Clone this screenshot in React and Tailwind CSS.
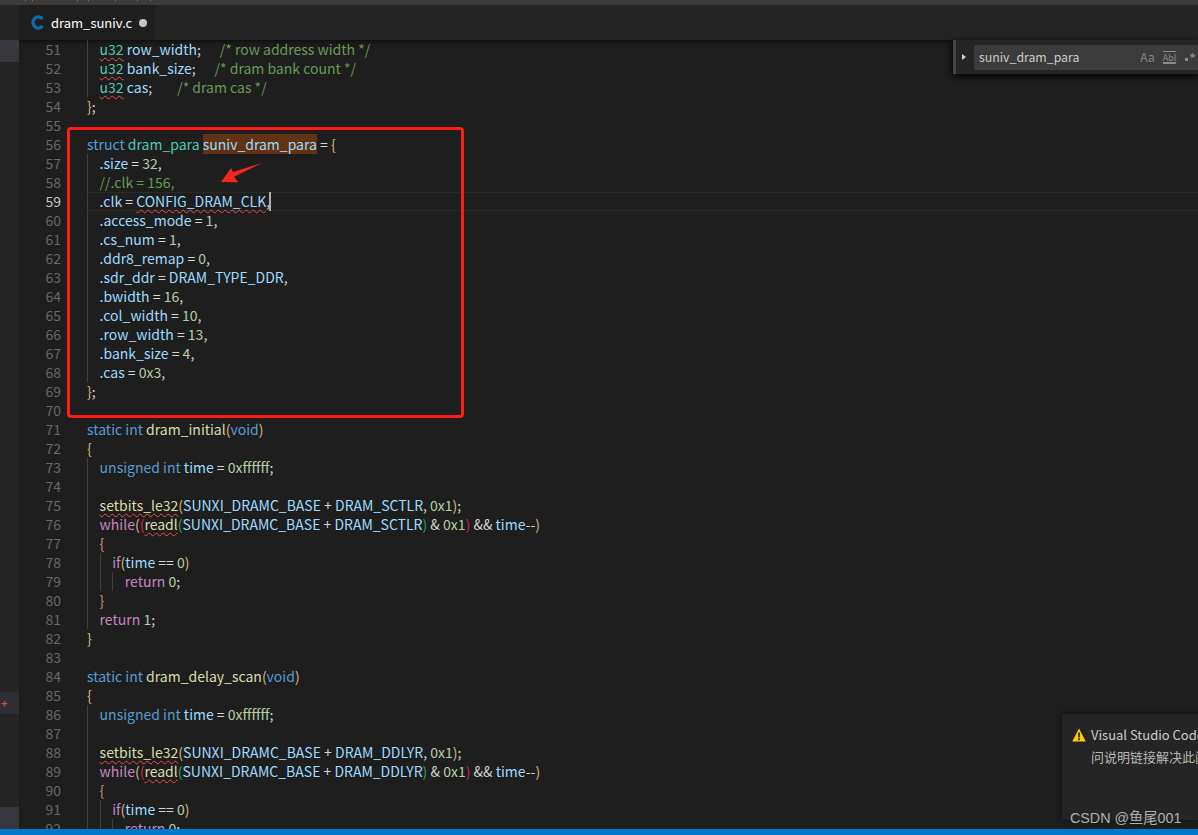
const K = "text-[#569cd6]", T = "text-[#4ec9b0]", V = "text-[#9cdcfe]", F = "text-[#dcdcaa]", N = "text-[#b5cea8]", C = "text-[#6a9955]", P = "text-[#c586c0]", D = "text-[#d4d4d4]", G = "text-[#d7ba7d]", O = "text-[#ce9178]", R = "text-[#c9245a]", E = "text-[#2aa35c]";
const W = "underline decoration-wavy decoration-[#f14c4c] decoration-1 underline-offset-2";

const lines = [
  [51, 1, [["u32", T, 1], [" "], ["row_width", V], [";      "], ["/* row address width */", C]]],
  [52, 1, [["u32", T, 1], [" "], ["bank_size", V], [";      "], ["/* dram bank count */", C]]],
  [53, 1, [["u32", T, 1], [" "], ["cas", V], [";        "], ["/* dram cas */", C]]],
  [54, 0, [["}", G], [";"]]],
  [55, 0, []],
  [56, 0, [["struct", K], [" "], ["dram_para", T], [" "], ["suniv_dram_para", V, 0, 1], [" = "], ["{", G]]],
  [57, 1, [[".size", V], [" = "], ["32", N], [","]]],
  [58, 1, [["//.clk = 156,", C]]],
  [59, 1, [[".clk", V], [" = "], ["CONFIG_DRAM_CLK", V, 1], [","]], 1],
  [60, 1, [[".access_mode", V], [" = "], ["1", N], [","]]],
  [61, 1, [[".cs_num", V], [" = "], ["1", N], [","]]],
  [62, 1, [[".ddr8_remap", V], [" = "], ["0", N], [","]]],
  [63, 1, [[".sdr_ddr", V], [" = "], ["DRAM_TYPE_DDR", V], [","]]],
  [64, 1, [[".bwidth", V], [" = "], ["16", N], [","]]],
  [65, 1, [[".col_width", V], [" = "], ["10", N], [","]]],
  [66, 1, [[".row_width", V], [" = "], ["13", N], [","]]],
  [67, 1, [[".bank_size", V], [" = "], ["4", N], [","]]],
  [68, 1, [[".cas", V], [" = "], ["0x3", N], [","]]],
  [69, 0, [["}", G], [";"]]],
  [70, 0, []],
  [71, 0, [["static", K], [" "], ["int", K], [" "], ["dram_initial", F], ["(", G], ["void", K], [")", G]]],
  [72, 0, [["{", G]]],
  [73, 1, [["unsigned", K], [" "], ["int", K], [" "], ["time", V], [" = "], ["0xffffff", N], [";"]]],
  [74, 1, []],
  [75, 1, [["setbits_le32", F, 1], ["(", G], ["SUNXI_DRAMC_BASE", V], [" + "], ["DRAM_SCTLR", V], [", "], ["0x1", N], [")", G], [";"]]],
  [76, 1, [["while", P], ["(", G], ["(", R], ["readl", F, 1], ["(", E], ["SUNXI_DRAMC_BASE", V], [" + "], ["DRAM_SCTLR", V], [")", E], [" & "], ["0x1", N], [")", R], [" && "], ["time", V], ["--"], [")", G]]],
  [77, 1, [["{", O]]],
  [78, 2, [["if", P], ["(", G], ["time", V], [" == "], ["0", N], [")", G]]],
  [79, 3, [["return", P], [" "], ["0", N], [";"]]],
  [80, 1, [["}", O]]],
  [81, 1, [["return", P], [" "], ["1", N], [";"]]],
  [82, 0, [["}", G]]],
  [83, 0, []],
  [84, 0, [["static", K], [" "], ["int", K], [" "], ["dram_delay_scan", F], ["(", G], ["void", K], [")", G]]],
  [85, 0, [["{", G]]],
  [86, 1, [["unsigned", K], [" "], ["int", K], [" "], ["time", V], [" = "], ["0xffffff", N], [";"]]],
  [87, 1, []],
  [88, 1, [["setbits_le32", F, 1], ["(", G], ["SUNXI_DRAMC_BASE", V], [" + "], ["DRAM_DDLYR", V], [", "], ["0x1", N], [")", G], [";"]]],
  [89, 1, [["while", P], ["(", G], ["(", R], ["readl", F, 1], ["(", E], ["SUNXI_DRAMC_BASE", V], [" + "], ["DRAM_DDLYR", V], [")", E], [" & "], ["0x1", N], [")", R], [" && "], ["time", V], ["--"], [")", G]]],
  [90, 1, [["{", O]]],
  [91, 2, [["if", P], ["(", G], ["time", V], [" == "], ["0", N], [")", G]]],
  [92, 3, [["return", P], [" "], ["0", N], [";"]]],
];

function Line({ n, indent, toks, current }) {
  return (
    <div className="flex h-[19px] shrink-0 leading-[19px]">
      <div className={`w-[42px] shrink-0 text-right ${current ? "text-[#c6c6c6]" : "text-[#686868]"}`}>{n}</div>
      <div className={`ml-[26px] flex min-w-0 flex-1 box-border ${current ? "border-y border-[#2a2a2a]" : ""}`}>
        {Array.from({ length: indent }).map((_, i) => (
          <div key={i} className="h-full w-[12.6px] shrink-0 border-l border-[#404040]" />
        ))}
        <div className={`whitespace-pre ${current ? "-mt-px" : ""}`}>
          {toks.map(([s, c, sq, hl], i) => (
            <span key={i} className={`${c || D} ${sq ? W : ""} ${hl ? "bg-[#613214]" : ""}`}>{s}</span>
          ))}
          {current ? <span className="-ml-px inline-block h-[19px] w-[2px] bg-[#aeafad] align-top" /> : null}
        </div>
      </div>
    </div>
  );
}

export default function App() {
  return (
    <div className="relative flex h-[835px] w-[1198px] flex-col overflow-hidden bg-[#1e1e1e] font-['Noto_Sans_CJK_SC','Noto_Sans',sans-serif] text-[14px] text-[#d4d4d4]">
      {/* window top strip: clipped menu glyphs */}
      <svg className="block h-[5px] w-full shrink-0 bg-[#3c3b37]" viewBox="0 0 1198 5" preserveAspectRatio="none">
        {[25, 32, 77, 88, 115, 137, 150].map((x) => (
          <rect key={x} x={x} y="0" width="1" height="1.5" fill="#7a6e5a" />
        ))}
      </svg>
      <div className="flex min-h-0 flex-1">
        {/* side bar remnant */}
        <div className="flex w-[19px] shrink-0 flex-col bg-[#252526]">
          <div className="h-[35px] shrink-0" />
          <div className="h-[22px] shrink-0 bg-[#37373d]" />
          <div className="h-[630px] shrink-0" />
          <div className="flex h-[22px] shrink-0 items-center justify-start bg-[#2f2d35] pl-px text-[11px] font-bold leading-none text-[#c74e39]">+</div>
          <div className="h-[93px] shrink-0" />
          <div className="h-[22px] shrink-0 bg-[#37373d]" />
        </div>
        <div className="flex min-w-0 flex-1 flex-col">
          {/* tabs */}
          <div className="flex h-[35px] shrink-0 bg-[#252526]">
            <div className="flex w-[136px] items-center bg-[#1e1e1e] pl-[12px]">
              <svg width="13" height="15" viewBox="0 0 13 15" className="shrink-0">
                <path d="M11.6 4A5.4 5.6 0 1 0 11.6 11" fill="none" stroke="#0b6ea8" strokeWidth="3.4" />
              </svg>
              <span className="ml-[7px] text-[13px] text-[#ffffff]">dram_suniv.c</span>
              <span className="ml-[7px] h-[8px] w-[8px] rounded-full bg-[#c5c5c5]" />
            </div>
          </div>
          {/* editor */}
          <div className="flex min-h-0 flex-1 flex-col overflow-hidden shadow-[inset_0_6px_6px_-6px_#000]">
            {lines.map(([n, ind, toks, cur]) => (
              <Line key={n} n={n} indent={ind} toks={toks} current={cur} />
            ))}
          </div>
        </div>
      </div>
      {/* status bar */}
      <div className="h-[6px] shrink-0 bg-[#007acc]" />

      {/* red annotation box */}
      <div className="absolute left-[67px] top-[127px] h-[291px] w-[397px] rounded-[4px] border-[3px] border-[#ff1c14]" />
      {/* red arrow */}
      <svg className="absolute left-[219px] top-[160px]" width="44" height="26" viewBox="0 0 44 26">
        <path d="M2 22 L12 8 L14 12 L43 3 L15 16.7 L19.3 22.3 Z" fill="#f5261c" />
      </svg>

      {/* find widget */}
      <div className="absolute left-[953px] top-[40px] flex h-[34px] w-[245px] items-center border-l-[3px] border-[#454545] bg-[#252526] shadow-[0_2px_8px_#000]">
        <svg width="6" height="8" viewBox="0 0 6 8" className="ml-[5px] shrink-0">
          <path d="M1 1 L5 4 L1 7 Z" fill="#d0d0d0" />
        </svg>
        <div className="ml-[7px] flex h-[25px] flex-1 items-center bg-[#3c3c3c] pl-[5px] text-[12.3px] text-[#cccccc]">
          <span>suniv_dram_para</span>
          <span className="ml-[61px] text-[12px] text-[#858585]">Aa</span>
          <span className="ml-[8px] border-y border-[#8a8a8a] text-[9px] leading-[11px] text-[#8a8a8a] underline">Abl</span>
          <span className="ml-[9px] flex items-start text-[13px] font-bold leading-none text-[#8a8a8a]">
            <span className="mt-[7px] h-[3px] w-[3px] bg-[#8a8a8a]" />
            <span className="ml-[1px]">*</span>
          </span>
        </div>
      </div>

      {/* notification */}
      <div className="absolute left-[1062px] top-[714px] h-[106px] w-[136px] overflow-hidden bg-[#252526] pl-[10px] pt-[9px] text-[13px] shadow-[0_0_6px_#111]">
        <div className="flex h-[24px] items-center whitespace-nowrap text-[#cccccc]">
          <svg width="14" height="14" viewBox="0 0 14 14" className="shrink-0">
            <path d="M7 0.5 L13.8 13.5 H0.2 Z" fill="#ffcc00" />
            <rect x="6.2" y="4.5" width="1.7" height="5" fill="#1e1e1e" />
            <rect x="6.2" y="10.4" width="1.7" height="1.8" fill="#1e1e1e" />
          </svg>
          <span className="ml-[5px]">Visual Studio Code</span>
        </div>
        <div className="ml-[19px] mt-[-2px] h-[24px] whitespace-nowrap leading-[24px] text-[#b8b8b8]">问说明链接解决此问题</div>
      </div>

      {/* watermark */}
      <div className="absolute left-[1070px] top-[808px] font-['Liberation_Sans','Noto_Sans_CJK_SC',sans-serif] text-[14.3px] leading-[20px] text-[#b0b0b0]">CSDN @鱼尾001</div>
    </div>
  );
}
